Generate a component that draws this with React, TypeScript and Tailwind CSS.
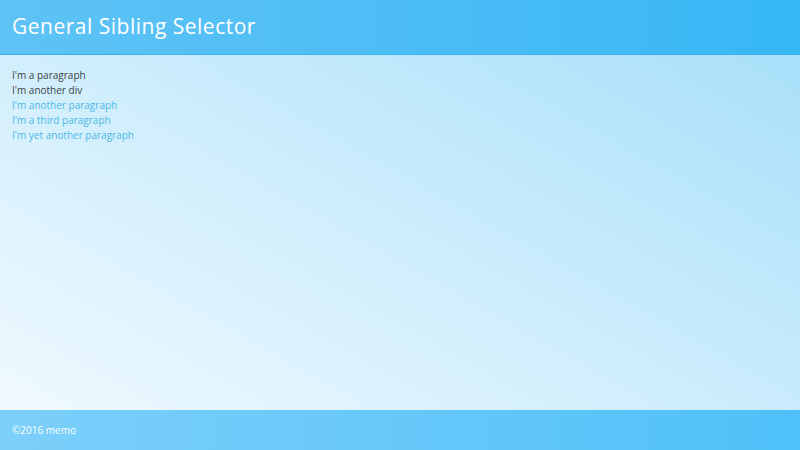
export default function App() {
  return (
    <div
      className="flex h-[450px] w-full flex-col bg-gradient-to-tr from-[#f3fbff] via-[#cdedfc] to-[#a3def9]"
      style={{ fontFamily: '"Open Sans", "Liberation Sans", sans-serif' }}
    >
      <header className="flex h-[55px] items-center border-b border-[#3db2ec] bg-gradient-to-r from-[#5ec3f5] to-[#36b7f6] px-3">
        <h1 className="text-[21px] font-normal tracking-[0.5px] text-white">
          General Sibling Selector
        </h1>
      </header>

      <main className="flex-1 px-3 pt-[13px] text-[10px] leading-[15px]">
        <p className="text-[#3a3f44]">I'm a paragraph</p>
        <div className="text-[#3a3f44]">I'm another div</div>
        <p className="text-[#4cb8e6]">I'm another paragraph</p>
        <p className="text-[#4cb8e6]">I'm a third paragraph</p>
        <p className="text-[#4cb8e6]">I'm yet another paragraph</p>
      </main>

      <footer className="flex h-[40px] items-center bg-gradient-to-r from-[#7ccffa] to-[#4dc1f8] px-3 text-[10px] text-white">
        ©2016 memo
      </footer>
    </div>
  );
}
